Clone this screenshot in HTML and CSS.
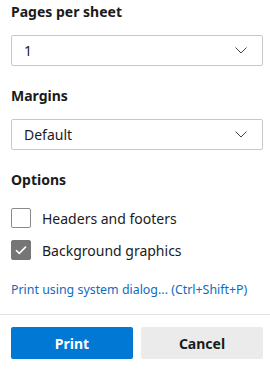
FILE: index.html
```html
<!DOCTYPE html>
<html lang="en">
<head>
  <meta charset="UTF-8" />
  <title>Print</title>
  <link rel="stylesheet" href="styles.css">
</head>
<body>

  <div class="settings">
    <h2 class="section-title">Pages per sheet</h2>
    <div class="dropdown">
      <span>1</span>
      <svg class="chevron" width="12" height="7" viewBox="0 0 12 7">
        <path d="M0.5 0.5 L6 6 L11.5 0.5" fill="none" stroke="#444" stroke-width="1" />
      </svg>
    </div>

    <h2 class="section-title">Margins</h2>
    <div class="dropdown">
      <span>Default</span>
      <svg class="chevron" width="12" height="7" viewBox="0 0 12 7">
        <path d="M0.5 0.5 L6 6 L11.5 0.5" fill="none" stroke="#444" stroke-width="1" />
      </svg>
    </div>

    <h2 class="section-title">Options</h2>
    <label class="option">
      <span class="checkbox"></span>
      Headers and footers
    </label>
    <label class="option">
      <span class="checkbox checked">
        <svg width="12" height="10" viewBox="0 0 12 10">
          <path d="M1 5.2 L4.3 8.4 L11 1.6" fill="none" stroke="#fff" stroke-width="1.6" />
        </svg>
      </span>
      Background graphics
    </label>

    <a class="system-link" href="#">Print using system dialog... (Ctrl+Shift+P)</a>
  </div>

  <div class="actions">
    <button class="btn primary">Print</button>
    <button class="btn">Cancel</button>
  </div>

</body>
</html>
```
FILE: styles.css
```css
* {
  box-sizing: border-box;
}

html, body {
  margin: 0;
  padding: 0;
}

body {
  font-family: "Noto Sans", "Open Sans", sans-serif;
  color: #1b1b1b;
  background: #fff;
  width: 270px;
  height: 374px;
  overflow: hidden;
}

.settings {
  padding: 2px 8px 0 11px;
}

.section-title {
  font-size: 14px;
  font-weight: 700;
  line-height: 20px;
  margin: 0 0 13px;
}

.dropdown {
  height: 31px;
  width: 252px;
  border: 1px solid #c8c8c8;
  border-radius: 2px;
  display: flex;
  align-items: center;
  justify-content: space-between;
  padding: 0 15px 0 12px;
  font-size: 14px;
  margin-bottom: 20px;
}

.chevron {
  display: block;
}

.option {
  display: flex;
  align-items: center;
  gap: 11px;
  font-size: 14px;
  height: 20px;
  margin-bottom: 12px;
}

.section-title + .option {
  margin-top: 18px;
}

.checkbox {
  width: 20px;
  height: 20px;
  border: 1px solid #8a8a8a;
  border-radius: 2px;
  display: flex;
  align-items: center;
  justify-content: center;
}

.checkbox.checked {
  background: #767676;
  border-color: #767676;
}

.system-link {
  display: block;
  margin-top: 22px;
  font-size: 12.4px;
  line-height: 16px;
  color: #0f6cbd;
  text-decoration: none;
}

.actions {
  margin-top: 16px;
  border-top: 1px solid #e3e3e3;
  padding: 12px 7px 0 11px;
  display: flex;
  gap: 8px;
}

.btn {
  flex: 1;
  height: 32px;
  border: none;
  border-radius: 2px;
  background: #ebebeb;
  color: #1b1b1b;
  font-family: inherit;
  font-size: 14px;
  font-weight: 700;
  cursor: pointer;
}

.btn.primary {
  background: #0078d4;
  color: #fff;
}
```
